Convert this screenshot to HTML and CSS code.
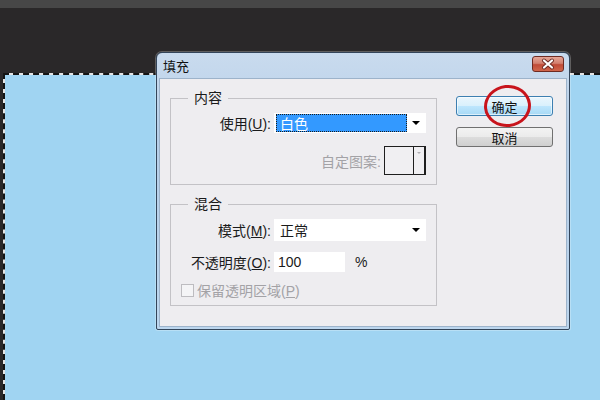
FILE: index.html
```html
<!DOCTYPE html>
<html lang="zh-CN">
<head>
    <meta charset="UTF-8">
    <meta name="viewport" content="width=device-width, initial-scale=1.0">
    <title>填充</title>
    <link rel="stylesheet" href="styles.css">
</head>
<body>
    <div class="app">
        <div class="menubar"></div>

        <div class="workspace">
            <div class="selection">
                <div class="canvas"></div>
            </div>
        </div>

        <!-- Fill dialog -->
        <div class="dialog">
            <div class="titlebar">
                <span class="title">填充</span>
                <button class="close-btn" type="button">
                    <svg width="30" height="14" viewBox="0 0 30 14">
                        <path d="M11 3.5 L19 10.5 M19 3.5 L11 10.5" stroke="#6b2a22" stroke-width="4" stroke-linecap="round"/>
                        <path d="M11 3.5 L19 10.5 M19 3.5 L11 10.5" stroke="#fff" stroke-width="2.2" stroke-linecap="round"/>
                    </svg>
                </button>
            </div>

            <div class="dialog-body">
                <div class="groups">
                    <fieldset class="group group-content">
                        <legend>内容</legend>
                        <label class="field-label">使用(<u>U</u>):</label>
                        <div class="select">
                            <span class="select-value selected">白色</span>
                            <span class="arrow"></span>
                        </div>
                        <div class="pattern-row">
                            <span class="muted">自定图案:</span>
                            <div class="pattern-swatch">
                                <span class="swatch-preview"></span>
                                <span class="swatch-toggle"><span class="arrow arrow-muted"></span></span>
                            </div>
                        </div>
                    </fieldset>

                    <fieldset class="group group-blend">
                        <legend>混合</legend>
                        <label class="field-label">模式(<u>M</u>):</label>
                        <div class="select select-tall">
                            <span class="select-value">正常</span>
                            <span class="arrow"></span>
                        </div>
                        <label class="field-label">不透明度(<u>O</u>):</label>
                        <div class="opacity-field">
                            <input class="text-input" type="text" value="100">
                            <span>%</span>
                        </div>
                        <div class="check-row">
                            <span class="checkbox"></span>
                            <span class="muted">保留透明区域(<u>P</u>)</span>
                        </div>
                    </fieldset>
                </div>

                <div class="actions">
                    <button class="btn btn-default" type="button">确定</button>
                    <button class="btn" type="button">取消</button>
                </div>
            </div>
        </div>

        <div class="annotation-ring"></div>
    </div>
</body>
</html>
```

FILE: styles.css
```css
body {
    margin: 0;
    padding: 0;
    font-family: "Liberation Sans", "Noto Sans CJK SC", sans-serif;
    font-size: 13px;
    color: #1a1a1a;
}

.app {
    width: 600px;
    height: 400px;
    position: relative;
    overflow: hidden;
    display: flex;
    flex-direction: column;
    background-color: #2a2829;
}

.menubar {
    height: 8px;
    background-color: #474747;
}

.workspace {
    flex: 1;
    display: flex;
    padding: 65px 0 0 3px;
}

/* marching ants: dashes over a light backing */
.selection {
    flex: 1;
    display: flex;
    border-top: 2px dashed #141414;
    border-left: 2px dashed #141414;
    background-color: #e4e4e4;
}

.canvas {
    flex: 1;
    background-color: #a0d4f2;
}

/* Dialog window */
.dialog {
    position: absolute;
    left: 156px;
    top: 52px;
    width: 414px;
    height: 278px;
    box-sizing: border-box;
    display: flex;
    flex-direction: column;
    border: 1px solid #33455a;
    border-radius: 6px 6px 2px 2px;
    background: linear-gradient(#c9dbee, #b6cee8 30%, #bcd6ee);
    padding: 0 2px 2px;
    box-shadow: 0 0 0 1px rgba(255, 255, 255, 0.25);
}

.titlebar {
    height: 25px;
    display: flex;
    align-items: center;
    justify-content: space-between;
    padding: 0 3px 0 4px;
}

.title {
    font-size: 13px;
    color: #111;
    margin-top: -1px;
}

.close-btn {
    width: 32px;
    height: 16px;
    margin-top: -3px;
    padding: 0;
    border: 1px solid #6e2b22;
    border-radius: 3px;
    background: linear-gradient(#e6a697, #d3806f 45%, #c04b37 55%, #d0664c);
    display: flex;
    align-items: center;
    justify-content: center;
}

.dialog-body {
    flex: 1;
    display: flex;
    gap: 19px;
    padding: 10px 0 0 10px;
    background-color: #eeedf0;
    border: 1px solid #9db3ca;
}

.groups {
    width: 267px;
    display: flex;
    flex-direction: column;
    gap: 10px;
    font-size: 14px;
}

.group {
    margin: 0;
    padding: 6px 10px 9px 0;
    border: 1px solid #c3c2c6;
    display: grid;
    grid-template-columns: 100px 152px;
    column-gap: 3px;
    row-gap: 13px;
    align-items: center;
}

.group legend {
    margin-left: 17px;
    padding: 0 6px;
    line-height: 18px;
    font-size: 14px;
}

.group-blend {
    row-gap: 11px;
    padding-bottom: 8px;
}

.field-label {
    text-align: right;
    white-space: nowrap;
}

.muted {
    color: #a3a2a6;
}

/* Dropdowns */
.select {
    height: 20px;
    box-sizing: border-box;
    display: flex;
    align-items: center;
    padding: 1px 2px;
    background-color: #fff;
}

.select-tall {
    height: 22px;
}

.select-value {
    width: 131px;
    height: 100%;
    box-sizing: border-box;
    display: flex;
    align-items: center;
    padding-left: 4px;
}

.select-value.selected {
    background-color: #3399ff;
    color: #fff;
    outline: 1px dotted #1b1b1b;
    outline-offset: -1px;
}

.arrow {
    width: 0;
    height: 0;
    margin-left: auto;
    margin-right: 4px;
    border-left: 4px solid transparent;
    border-right: 4px solid transparent;
    border-top: 4px solid #000;
}

.arrow-muted {
    margin: 0;
    border-left-width: 2px;
    border-right-width: 2px;
    border-top: 2px solid #b0afb3;
}

.pattern-row {
    grid-column: 1 / 3;
    display: flex;
    justify-content: flex-end;
    align-items: center;
    gap: 3px;
}

.pattern-swatch {
    width: 42px;
    height: 29px;
    box-sizing: border-box;
    display: flex;
    border: 1px solid #1e1e1e;
    border-right-width: 2px;
    background-color: #f0eff2;
}

.swatch-preview {
    width: 28px;
    border-right: 1px solid #1e1e1e;
}

.swatch-toggle {
    flex: 1;
    display: flex;
    justify-content: center;
    padding-top: 5px;
}

.opacity-field {
    display: flex;
    align-items: center;
    gap: 10px;
}

.text-input {
    width: 71px;
    height: 20px;
    box-sizing: border-box;
    border: none;
    padding: 0 0 0 4px;
    background-color: #fff;
    font-family: inherit;
    font-size: 14px;
    color: #1a1a1a;
}

.check-row {
    grid-column: 1 / 3;
    display: flex;
    align-items: center;
    gap: 3px;
    padding-left: 10px;
    height: 14px;
}

.checkbox {
    width: 13px;
    height: 13px;
    box-sizing: border-box;
    border: 1px solid #bdbcc0;
    background-color: #f4f4f6;
}

/* Buttons */
.actions {
    width: 97px;
    display: flex;
    flex-direction: column;
    gap: 11px;
    padding-top: 7px;
}

.btn {
    height: 20px;
    padding: 0;
    border: 1px solid #707070;
    border-radius: 3px;
    background: linear-gradient(#f3f3f3, #ebebeb 50%, #dddddd 50%, #cfcfcf);
    font-family: inherit;
    font-size: 13px;
    color: #111;
}

.btn-default {
    border-color: #3c7fb1;
    background: linear-gradient(#eaf6fd, #d9f0fc 50%, #bee6fd 50%, #a7d9f5);
    box-shadow: inset 0 0 0 1px rgba(255, 255, 255, 0.6);
}

/* red marker drawn around the OK button */
.annotation-ring {
    position: absolute;
    left: 484px;
    top: 85px;
    width: 47px;
    height: 42px;
    box-sizing: border-box;
    border: 3px solid #c8141c;
    border-radius: 50%;
    transform: rotate(-6deg);
}
```
